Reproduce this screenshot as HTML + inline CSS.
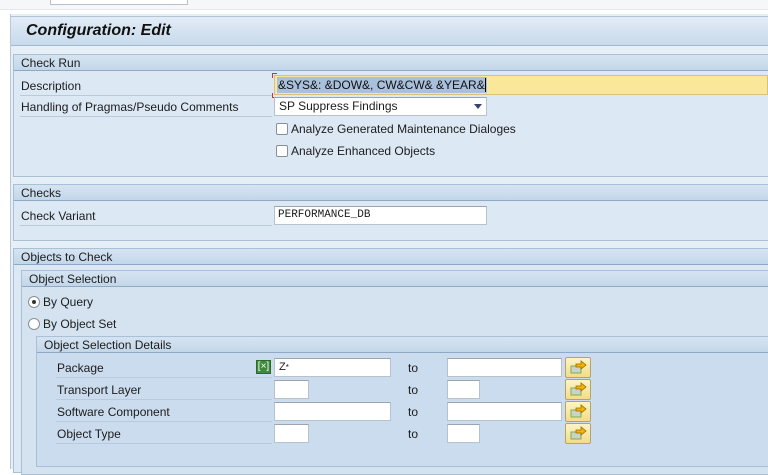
<!DOCTYPE html>
<html><head><meta charset="utf-8"><style>
*{box-sizing:border-box;margin:0;padding:0}
body{width:768px;height:469px;overflow:hidden;background:#fff;font-family:"Liberation Sans",sans-serif;font-size:12px;color:#1c1c1c;position:relative}
.a{position:absolute}
.hdr{background:linear-gradient(#d6e4f1,#c3d7ea);border-top:1px solid #a9c0d8;border-bottom:1px solid #8fa9c4;height:17px;line-height:16px;padding-left:7px;font-size:12px}
.box{border:1px solid #a9bfd6;background:#dce8f4}
.lbl{border-bottom:1px solid #b9cadb;height:20px;line-height:20px;padding-left:1px}
.inp{background:#fff;border:1px solid #b8c2cc;border-top-color:#9aa5b0;height:19px}
.cb{width:12px;height:12px;background:#fff;border:1px solid #8a8f96;border-radius:2px}
.btn{width:26px;height:21px;background:linear-gradient(#fdf3c6,#f4dc86);border:1px solid #b3a46a;border-radius:2px}
</style></head><body>
<div class="a" style="left:0;top:0;width:768px;height:10px;background:#f6f7f8;border-bottom:1px solid #e4e8ec"></div>
<div class="a" style="left:50px;top:-2px;width:138px;height:7px;background:#fff;border:1px solid #b8c0c8"></div>
<div class="a" style="left:10px;top:14px;width:758px;height:455px;background:#e6eef6;border-left:1px solid #b9c8d8"></div>
<div class="a" style="left:11px;top:16px;width:757px;height:30px;background:linear-gradient(#e2ecf6,#c8daeb);border-top:1px solid #b0c4d8;border-bottom:1px solid #a2b9d0;font-weight:bold;font-style:italic;font-size:16px;line-height:28px;padding-left:15px;color:#111">Configuration: Edit</div>

<div class="a box" style="left:13px;top:54px;width:756px;height:123px"></div>
<div class="a hdr" style="left:14px;top:54px;width:754px">Check Run</div>
<div class="a lbl" style="left:20px;top:76px;width:252px">Description</div>
<div class="a lbl" style="left:20px;top:97px;width:252px">Handling of Pragmas/Pseudo Comments</div>
<div class="a" style="left:274px;top:75px;width:494px;height:20px;background:#fbe79a;border:1px solid #d6c27a"></div>
<div class="a" style="left:277px;top:77px;height:16px;background:#a8c0dc;line-height:16px;padding:0 1px;color:#111">&amp;SYS&amp;: &amp;DOW&amp;, CW&amp;CW&amp; &amp;YEAR&amp;<span style="border-left:1px solid #000"></span></div>
<div class="a" style="left:272px;top:73px;width:5px;height:5px;border-left:1px solid #c33;border-top:1px solid #c33"></div>
<div class="a" style="left:272px;top:93px;width:5px;height:5px;border-left:1px solid #c33;border-bottom:1px solid #c33"></div>
<div class="a inp" style="left:274px;top:97px;width:213px;line-height:17px;padding-left:4px">SP Suppress Findings</div>
<div class="a" style="left:474px;top:104px;border-left:4px solid transparent;border-right:4px solid transparent;border-top:5px solid #34456a"></div>
<div class="a cb" style="left:276px;top:123px"></div>
<div class="a" style="left:291px;top:122px;line-height:15px">Analyze Generated Maintenance Dialoges</div>
<div class="a cb" style="left:276px;top:145px"></div>
<div class="a" style="left:291px;top:144px;line-height:15px">Analyze Enhanced Objects</div>

<div class="a box" style="left:13px;top:184px;width:756px;height:57px"></div>
<div class="a hdr" style="left:14px;top:184px;width:754px">Checks</div>
<div class="a lbl" style="left:20px;top:206px;width:252px">Check Variant</div>
<div class="a inp" style="left:274px;top:206px;width:213px;line-height:17px;padding-left:3px;font-family:'Liberation Mono',monospace;font-size:11px">PERFORMANCE_DB</div>

<div class="a box" style="left:13px;top:248px;width:756px;height:225px"></div>
<div class="a hdr" style="left:14px;top:248px;width:754px">Objects to Check</div>
<div class="a box" style="left:21px;top:270px;width:748px;height:205px;background:#d5e3f1"></div>
<div class="a hdr" style="left:22px;top:270px;width:746px">Object Selection</div>
<div class="a" style="left:28px;top:296px;width:12px;height:12px;border-radius:50%;background:#fff;border:1px solid #8a8f96"></div>
<div class="a" style="left:32px;top:300px;width:4px;height:4px;border-radius:50%;background:#333"></div>
<div class="a" style="left:43px;top:295px;line-height:15px">By Query</div>
<div class="a" style="left:28px;top:318px;width:12px;height:12px;border-radius:50%;background:#fff;border:1px solid #8a8f96"></div>
<div class="a" style="left:43px;top:317px;line-height:15px">By Object Set</div>
<div class="a box" style="left:36px;top:336px;width:733px;height:131px;background:#cadcee"></div>
<div class="a hdr" style="left:37px;top:336px;width:731px">Object Selection Details</div>

<div class="a lbl" style="left:56px;top:358px;width:216px">Package</div>
<div class="a lbl" style="left:56px;top:380px;width:216px">Transport Layer</div>
<div class="a lbl" style="left:56px;top:402px;width:216px">Software Component</div>
<div class="a lbl" style="left:56px;top:424px;width:216px">Object Type</div>
<div class="a" style="left:256px;top:360px;width:15px;height:14px;background:#3f8a3a;border:1px solid #2d6b29;color:#fff;font-size:10px;line-height:11px;text-align:center">[×]</div>
<div class="a inp" style="left:274px;top:358px;width:117px;line-height:17px;padding-left:4px;font-size:11px">Z<span style="font-size:8px;vertical-align:top">*</span></div>
<div class="a inp" style="left:274px;top:380px;width:35px"></div>
<div class="a inp" style="left:274px;top:402px;width:117px"></div>
<div class="a inp" style="left:274px;top:424px;width:35px"></div>
<div class="a" style="left:408px;top:361px">to</div>
<div class="a" style="left:408px;top:383px">to</div>
<div class="a" style="left:408px;top:405px">to</div>
<div class="a" style="left:408px;top:427px">to</div>
<div class="a inp" style="left:447px;top:358px;width:115px"></div>
<div class="a inp" style="left:447px;top:380px;width:33px"></div>
<div class="a inp" style="left:447px;top:402px;width:115px"></div>
<div class="a inp" style="left:447px;top:424px;width:33px"></div>
<div class="a btn" style="left:565px;top:357px"><svg width="24" height="19"><rect x="5" y="8" width="10" height="7" fill="#c9d3c8" stroke="#7ab050"/><path d="M10 6h5V3l5 4-5 4V9h-5z" fill="#f5b400" stroke="#9a6a00" stroke-width=".8"/></svg></div>
<div class="a btn" style="left:565px;top:379px"><svg width="24" height="19"><rect x="5" y="8" width="10" height="7" fill="#c9d3c8" stroke="#7ab050"/><path d="M10 6h5V3l5 4-5 4V9h-5z" fill="#f5b400" stroke="#9a6a00" stroke-width=".8"/></svg></div>
<div class="a btn" style="left:565px;top:401px"><svg width="24" height="19"><rect x="5" y="8" width="10" height="7" fill="#c9d3c8" stroke="#7ab050"/><path d="M10 6h5V3l5 4-5 4V9h-5z" fill="#f5b400" stroke="#9a6a00" stroke-width=".8"/></svg></div>
<div class="a btn" style="left:565px;top:423px"><svg width="24" height="19"><rect x="5" y="8" width="10" height="7" fill="#c9d3c8" stroke="#7ab050"/><path d="M10 6h5V3l5 4-5 4V9h-5z" fill="#f5b400" stroke="#9a6a00" stroke-width=".8"/></svg></div>
</body></html>
